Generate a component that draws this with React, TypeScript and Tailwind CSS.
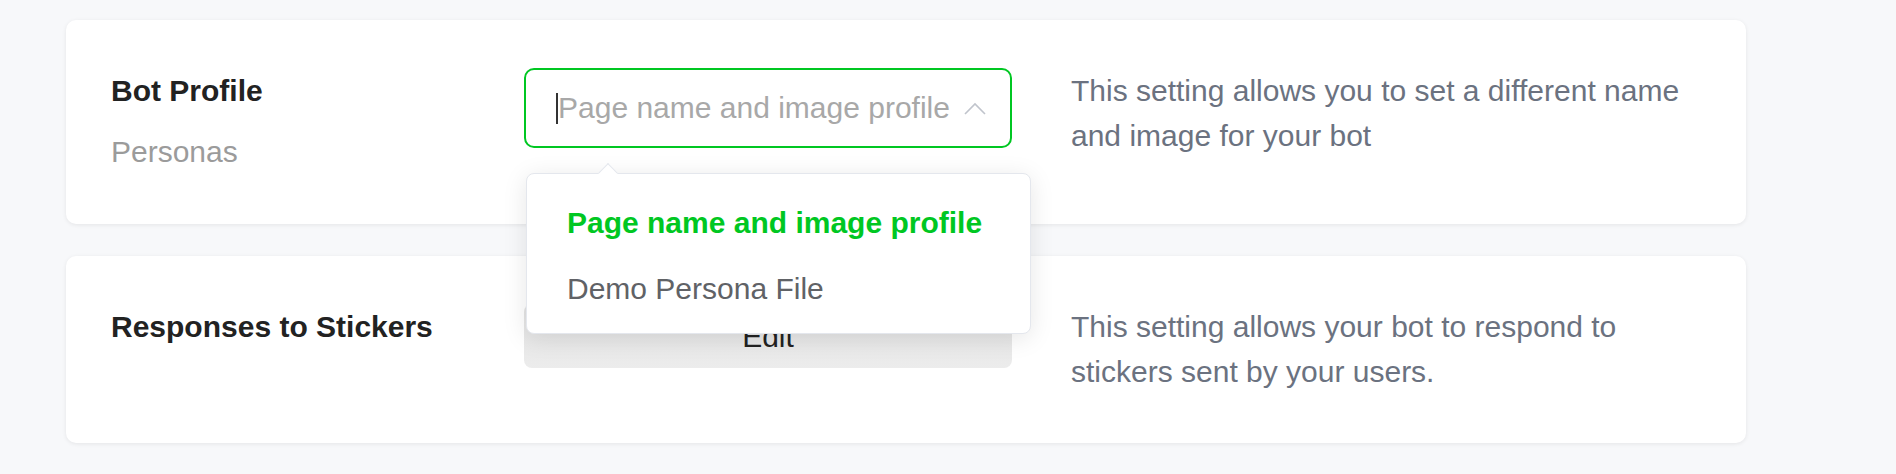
import React from "react";

// 設定カード：左にラベル、中央にコントロール、右に説明
function SettingCard({
  title,
  subtitle,
  control,
  description,
  className = "",
}: {
  title: string;
  subtitle?: string;
  control: React.ReactNode;
  description: string;
  className?: string;
}) {
  return (
    <div
      className={`flex items-start bg-white rounded-[10px] shadow-[0_1px_4px_rgba(0,0,0,0.08)] pl-[45px] pr-[45px] pt-[48px] ${className}`}
    >
      <div className="w-[413px] shrink-0">
        <div className="text-[30px] leading-[45px] font-bold text-[#222]">{title}</div>
        {subtitle && (
          <div className="mt-[16px] text-[30px] leading-[45px] text-[#9b9b9b]">{subtitle}</div>
        )}
      </div>
      <div className="w-[488px] shrink-0">{control}</div>
      <div className="ml-[59px] w-[630px] text-[30px] leading-[45px] text-[#6b7280]">
        {description}
      </div>
    </div>
  );
}

function PersonaSelect() {
  return (
    <div className="relative">
      <div className="flex items-center h-[80px] w-[488px] border-2 border-[#00c722] rounded-[10px] pl-[30px] pr-[24px]">
        {/* カーソル */}
        <span className="h-[31px] w-[2px] bg-[#333]" />
        <span className="text-[30px] leading-none text-[#a8a8a8] whitespace-nowrap">
          Page name and image profile
        </span>
        <svg className="ml-auto" width="22" height="13" viewBox="0 0 22 13" fill="none">
          <path d="M1 12L11 2L21 12" stroke="#c0c4cc" strokeWidth="1.6" />
        </svg>
      </div>
      {/* ドロップダウン */}
      <div className="absolute top-[105px] left-[2px] z-20 w-[505px] bg-white border border-[#e4e7ed] rounded-[8px] shadow-[0_4px_24px_rgba(0,0,0,0.1)] pt-[15px] pb-[12px]">
        <span className="absolute top-[-8px] left-[74px] w-[14px] h-[14px] rotate-45 bg-white border-l border-t border-[#e4e7ed]" />
        <div className="h-[66px] flex items-center px-[40px] text-[30px] font-bold text-[#00c722] whitespace-nowrap">
          Page name and image profile
        </div>
        <div className="h-[66px] flex items-center px-[40px] text-[30px] text-[#606266] whitespace-nowrap">
          Demo Persona File
        </div>
      </div>
    </div>
  );
}

export default function App() {
  return (
    <div className="h-[474px] w-full bg-[#f7f8fa] pt-[20px] pl-[66px] font-['Liberation_Sans',Arial,sans-serif]">
      <div className="w-[1680px] flex flex-col gap-[32px]">
        <SettingCard
          className="relative z-10 pb-[50px]"
          title="Bot Profile"
          subtitle="Personas"
          control={<PersonaSelect />}
          description="This setting allows you to set a different name and image for your bot"
        />
        <SettingCard
          className="pb-[49px]"
          title="Responses to Stickers"
          control={
            <button className="h-[64px] w-[488px] rounded-[8px] bg-gradient-to-b from-[#e2e2e2] to-[#ececec] text-[30px] text-[#222]">
              Edit
            </button>
          }
          description="This setting allows your bot to respond to stickers sent by your users."
        />
      </div>
    </div>
  );
}
